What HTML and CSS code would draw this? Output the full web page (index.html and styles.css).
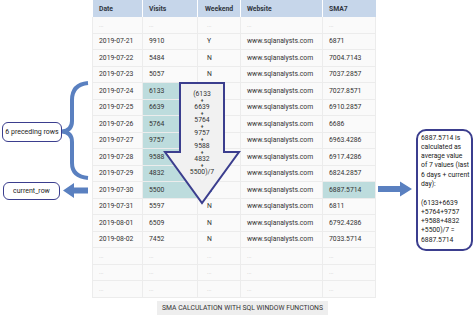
FILE: index.html
```html
<!DOCTYPE html>
<html>
<head>
<meta charset="utf-8">
<link rel="stylesheet" href="styles.css">
</head>
<body>
<div class="page">
  <div class="main">
    <table class="sma">
      <colgroup>
        <col class="c-date"><col class="c-visits"><col class="c-weekend"><col class="c-web"><col class="c-sma">
      </colgroup>
      <thead>
        <tr><th>Date</th><th>Visits</th><th class="wk">Weekend</th><th>Website</th><th>SMA7</th></tr>
      </thead>
      <tbody>
        <tr class="dots"><td>...</td><td>...</td><td>...</td><td>...</td><td>...</td></tr>
        <tr><td>2019-07-21</td><td>9910</td><td>Y</td><td>www.sqlanalysts.com</td><td>6871</td></tr>
        <tr><td>2019-07-22</td><td>5484</td><td>N</td><td>www.sqlanalysts.com</td><td>7004.7143</td></tr>
        <tr><td>2019-07-23</td><td>5057</td><td>N</td><td>www.sqlanalysts.com</td><td>7037.2857</td></tr>
        <tr><td>2019-07-24</td><td class="hl">6133</td><td>N</td><td>www.sqlanalysts.com</td><td>7027.8571</td></tr>
        <tr><td>2019-07-25</td><td class="hl">6639</td><td>Y</td><td>www.sqlanalysts.com</td><td>6910.2857</td></tr>
        <tr><td>2019-07-26</td><td class="hl">5764</td><td>N</td><td>www.sqlanalysts.com</td><td>6686</td></tr>
        <tr><td>2019-07-27</td><td class="hl">9757</td><td>N</td><td>www.sqlanalysts.com</td><td>6963.4286</td></tr>
        <tr><td>2019-07-28</td><td class="hl">9588</td><td>N</td><td>www.sqlanalysts.com</td><td>6917.4286</td></tr>
        <tr><td>2019-07-29</td><td class="hl">4832</td><td>N</td><td>www.sqlanalysts.com</td><td>6824.2857</td></tr>
        <tr><td>2019-07-30</td><td class="hl">5500</td><td>N</td><td>www.sqlanalysts.com</td><td class="hl">6887.5714</td></tr>
        <tr><td>2019-07-31</td><td>5597</td><td>N</td><td>www.sqlanalysts.com</td><td>6811</td></tr>
        <tr><td>2019-08-01</td><td>6509</td><td>N</td><td>www.sqlanalysts.com</td><td>6792.4286</td></tr>
        <tr><td>2019-08-02</td><td>7452</td><td>N</td><td>www.sqlanalysts.com</td><td>7033.5714</td></tr>
        <tr class="dots"><td>...</td><td>...</td><td>...</td><td>...</td><td>...</td></tr>
        <tr class="dots"><td>...</td><td>...</td><td>...</td><td>...</td><td>...</td></tr>
        <tr class="dots"><td>...</td><td>...</td><td>...</td><td>...</td><td>...</td></tr>
      </tbody>
    </table>
    <div class="caption">SMA CALCULATION WITH SQL WINDOW FUNCTIONS</div>
  </div>

  <svg class="overlay" width="474" height="315" viewBox="0 0 474 315">
    <path class="brace" d="M88,83 C77,84 72,90 72,100 L72,121 C72,128 68,131 62,131.5 C68,132 72,135 72,142 L72,163 C72,172 77,177 88,178"/>
    <polygon class="blue-arrow" points="88,187.5 74,187.5 74,183 63,190.5 74,198 74,193.5 88,193.5"/>
    <polygon class="blue-arrow" points="378,186 400,186 400,181.5 412,189 400,196.5 400,192 378,192"/>
    <path class="down-arrow" d="M180,83 L224,83 L224,152 L239,152 L202,203 L165,152 L180,152 Z"/>
  </svg>

  <div class="arrow-text">
    <span class="num">(6133</span><span class="plus">+</span>
    <span class="num">6639</span><span class="plus">+</span>
    <span class="num">5764</span><span class="plus">+</span>
    <span class="num">9757</span><span class="plus">+</span>
    <span class="num">9588</span><span class="plus">+</span>
    <span class="num">4832</span><span class="plus">+</span>
    <span class="num">5500)/7</span>
  </div>

  <div class="label label-preceding">6 preceding rows</div>
  <div class="label label-current">current_row</div>

  <div class="callout">6887.5714 is<br>calculated as<br>average value<br>of 7 values (last<br>6 days + current<br>day):<br><br>(6133+6639<br>+5764+9757<br>+9588+4832<br>+5500)/7 =<br>6887.5714</div>
</div>
</body>
</html>
```

FILE: styles.css
```css
html, body {
  margin: 0;
  padding: 0;
  background: #ffffff;
}

.page {
  position: relative;
  width: 474px;
  height: 315px;
  overflow: hidden;
  font-family: Roboto, "Liberation Sans", sans-serif;
  color: #333333;
}

.main {
  padding-left: 92px;
  display: flex;
  flex-direction: column;
}

.sma {
  border-collapse: collapse;
  table-layout: fixed;
  width: 283px;
  font-size: 6.8px;
}

.c-date { width: 50px; }
.c-visits { width: 55px; }
.c-weekend { width: 43px; }
.c-web { width: 82px; }
.c-sma { width: 53px; }

.sma th {
  height: 17px;
  padding: 0 0 0 6px;
  background: #c6d6ea;
  border-left: 1px solid #ffffff;
  font-weight: bold;
  text-align: left;
  color: #2f3540;
  font-size: 6.8px;
}

.sma th.wk {
  padding-left: 7px;
}

.sma td {
  height: 15.5px;
  padding: 0 0 0 6px;
  background: #fafafa;
  border: 1px solid #ececec;
  border-top: none;
  text-align: left;
  white-space: nowrap;
  overflow: hidden;
  line-height: 8px;
}

.sma td:nth-child(3) {
  padding-left: 9px;
}

.sma tr.dots td {
  color: #b5b5b5;
  font-size: 5.5px;
}

.sma td.hl {
  background: #bddcdd;
}

.caption {
  align-self: flex-start;
  margin: 3px 0 0 65px;
  background: #eeeeee;
  padding: 3px 5px 3px 5px;
  font-size: 6.8px;
  line-height: 8px;
  color: #333333;
}

.overlay {
  position: absolute;
  left: 0;
  top: 0;
  pointer-events: none;
}

.brace {
  fill: none;
  stroke: #5a80c0;
  stroke-width: 4;
  stroke-linecap: butt;
}

.blue-arrow {
  fill: #5a80c0;
}

.down-arrow {
  fill: #f1f1f1;
  stroke: #3b3e8e;
  stroke-width: 2;
  stroke-linejoin: miter;
}

.arrow-text {
  position: absolute;
  left: 177px;
  top: 90.5px;
  width: 50px;
  display: flex;
  flex-direction: column;
  align-items: center;
  color: #333333;
}

.arrow-text .num {
  display: block;
  height: 6.5px;
  font-size: 6.8px;
  line-height: 6.5px;
}

.arrow-text .plus {
  display: block;
  height: 6.5px;
  font-size: 5px;
  line-height: 6.5px;
  font-weight: bold;
}

.label {
  position: absolute;
  box-sizing: border-box;
  display: flex;
  align-items: center;
  justify-content: center;
  background: #ffffff;
  border: 1.5px solid #3b3e8e;
  border-radius: 6px;
  font-size: 7px;
  color: #222222;
}

.label-preceding {
  left: 2px;
  top: 121.5px;
  width: 60px;
  height: 20.5px;
}

.label-current {
  left: 3px;
  top: 182px;
  width: 57px;
  height: 18px;
}

.callout {
  position: absolute;
  box-sizing: border-box;
  left: 416px;
  top: 129px;
  width: 57px;
  height: 122px;
  padding: 2.5px 0 0 3px;
  background: #ffffff;
  border: 2px solid #3b3e8e;
  border-radius: 10px;
  font-size: 6.8px;
  line-height: 9.3px;
  color: #222222;
  white-space: nowrap;
}
```
